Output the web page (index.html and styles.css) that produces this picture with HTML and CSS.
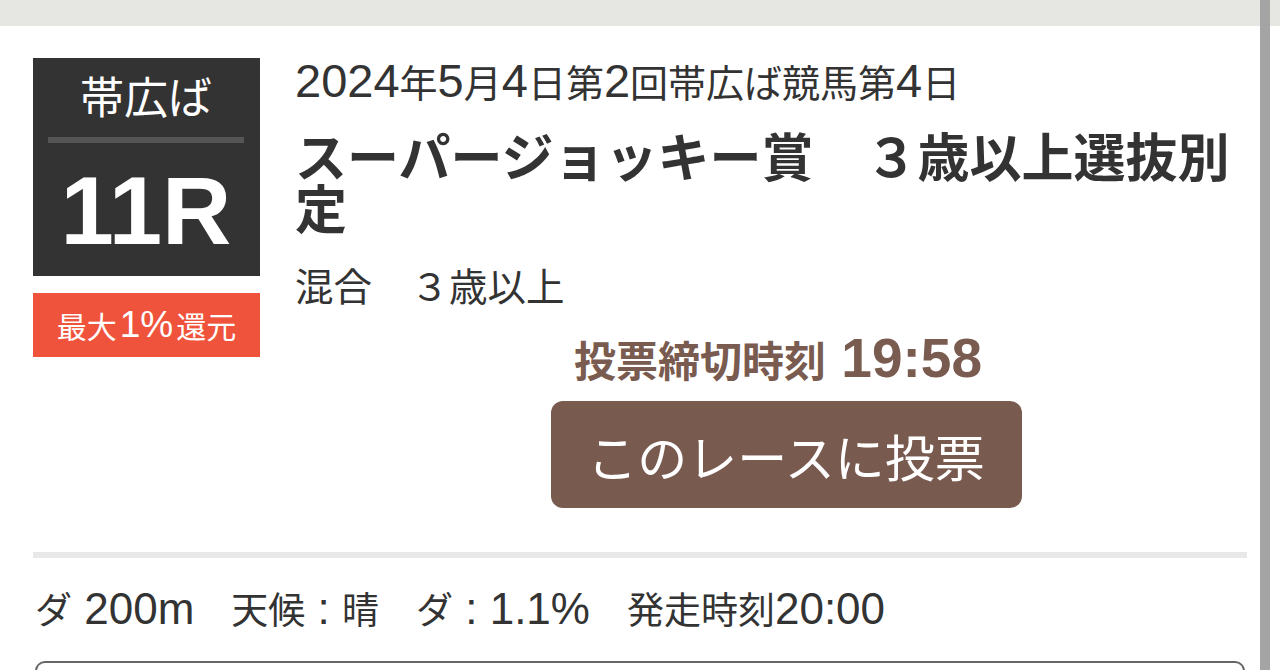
FILE: index.html
```html
<!DOCTYPE html>
<html lang="ja">
<head>
<meta charset="utf-8">
<title>帯広ば 11R</title>
<link rel="stylesheet" href="styles.css">
</head>
<body>
<div class="topbar"></div>
<main class="card">
  <section class="race-head">
    <div class="badge-col">
      <div class="race-box">
        <div class="venue">帯広ば</div>
        <div class="rule"></div>
        <div class="num">11R</div>
      </div>
      <div class="cashback">最大<span class="lat">1%</span>還元</div>
    </div>
    <div class="info-col">
      <p class="date"><span class="lat">2024</span>年<span class="lat">5</span>月<span class="lat">4</span>日第<span class="lat">2</span>回帯広ば競馬第<span class="lat">4</span>日</p>
      <h1 class="title">スーパージョッキー賞　３歳以上選抜別定</h1>
      <p class="cond">混合　３歳以上</p>
      <div class="vote">
        <p class="deadline">投票締切時刻<span class="lat"> 19:58</span></p>
        <a class="vote-btn" href="#">このレースに投票</a>
      </div>
    </div>
  </section>
  <div class="sep"></div>
  <p class="meta">ダ<span class="lat"> 200m</span>　天候<span class="lat"> : </span>晴　ダ<span class="lat"> : 1.1%</span>　発走時刻<span class="lat">20:00</span></p>
  <div class="next-box"></div>
</main>
<div class="scrollbar"></div>
</body>
</html>
```

FILE: styles.css
```css
html, body {
  margin: 0;
  padding: 0;
  background: #fff;
  overflow: hidden;
}
body {
  font-family: "Noto Sans CJK JP", "Noto Sans", sans-serif;
  color: #333;
  width: 1280px;
  height: 670px;
}
.lat {
  font-family: "Liberation Sans", Arial, sans-serif;
  line-height: 0;
}
.topbar {
  height: 26px;
  background: #e6e6e2;
}
.card {
  padding: 32px 33px 0 33px;
  width: 1214px;
}
.race-head {
  display: flex;
  gap: 35px;
}
.badge-col {
  width: 227px;
  flex: none;
  display: flex;
  flex-direction: column;
  gap: 17px;
}
.race-box {
  background: #333;
  height: 218px;
  box-sizing: border-box;
  padding: 15px 16px 0 15px;
  display: flex;
  flex-direction: column;
  align-items: center;
}
.venue {
  color: #fff;
  font-size: 44px;
  line-height: 44px;
  height: 44px;
}
.rule {
  align-self: stretch;
  height: 6px;
  background: #555;
  margin-top: 20px;
}
.num {
  margin-top: 20px;
  color: #fff;
  font-family: "Liberation Sans", Arial, sans-serif;
  font-weight: 700;
  font-size: 96px;
  line-height: 96px;
  height: 96px;
}
.cashback {
  background: #f0533c;
  color: #fff;
  height: 64px;
  display: flex;
  align-items: center;
  justify-content: center;
  font-size: 30px;
  line-height: 64px;
}
.cashback .lat {
  font-size: 37px;
  line-height: 64px;
  margin: 0 3px;
}
.info-col {
  flex: 1;
  min-width: 0;
}
.date {
  margin: 0;
  font-size: 38px;
  line-height: 46px;
  height: 46px;
}
.date .lat {
  font-size: 47px;
}
.title {
  margin: 25px 0 0 0;
  font-size: 52px;
  line-height: 52px;
  font-weight: 700;
}
.cond {
  margin: 28px 0 0 0;
  font-size: 38.5px;
  line-height: 46px;
  height: 46px;
}
.vote {
  display: flex;
  flex-direction: column;
  align-items: center;
  padding-left: 30px;
  margin-top: 27px;
}
.deadline {
  margin: 0 16px 0 0;
  color: #7a5b50;
  font-size: 42px;
  line-height: 50px;
  height: 50px;
  font-weight: 700;
}
.deadline .lat {
  font-size: 55px;
}
.vote-btn {
  margin-top: 17px;
  width: 471px;
  height: 107px;
  box-sizing: border-box;
  background: #785a4f;
  border-radius: 12px;
  color: #fff;
  font-size: 50px;
  text-decoration: none;
  display: flex;
  align-items: center;
  justify-content: center;
}
.sep {
  margin-top: 44px;
  height: 6px;
  background: #e8e8e8;
}
.meta {
  margin: 28px 0 0 2px;
  font-size: 37px;
  line-height: 44px;
  height: 44px;
}
.meta .lat {
  font-size: 44px;
}
.next-box {
  margin: 31px 2px 0 2px;
  height: 60px;
  border: 2px solid #666;
  border-bottom: none;
  border-radius: 10px 10px 0 0;
}
.scrollbar {
  position: fixed;
  top: 0;
  left: 1260px;
  width: 10px;
  height: 670px;
  background: #a4a4a4;
}
```
